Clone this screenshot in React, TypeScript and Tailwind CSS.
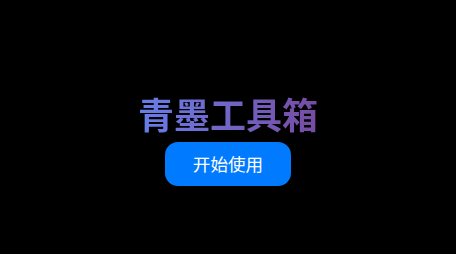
export default function App() {
  return (
    <div
      className="w-[456px] h-[254px] bg-black flex flex-col items-center pt-[87px]"
      style={{ fontFamily: '"Noto Sans CJK SC", "Noto Sans", sans-serif' }}
    >
      <h1 className="text-[36px] leading-[52px] font-bold bg-gradient-to-r from-[#667eea] to-[#764ba2] bg-clip-text text-transparent">
        青墨工具箱
      </h1>
      <button className="mt-[3px] px-[28px] py-[10px] text-[17.6px] leading-[24px] text-white bg-[#007bff] rounded-[13px]">
        开始使用
      </button>
    </div>
  );
}
